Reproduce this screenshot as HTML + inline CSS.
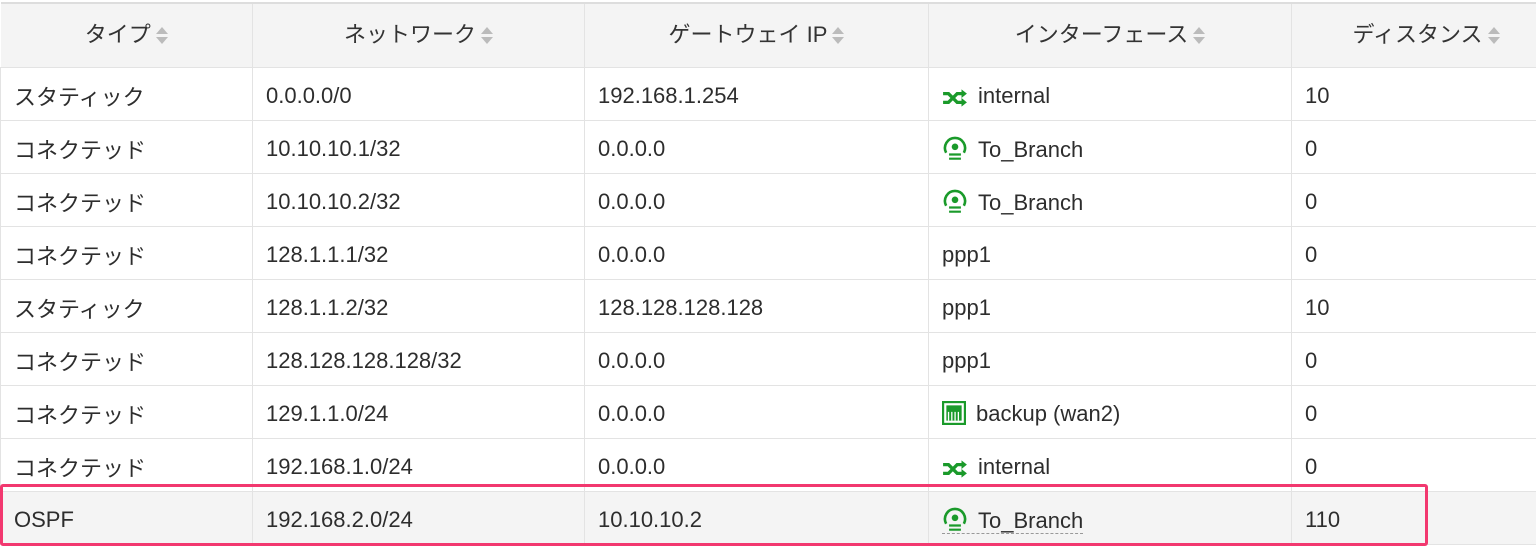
<!DOCTYPE html>
<html><head><meta charset="utf-8"><style>
body{margin:0;width:1536px;height:549px;overflow:hidden;background:#fff;font-family:"Liberation Sans","Noto Sans CJK JP",sans-serif;color:#2d2d2d;position:relative}
table{position:absolute;left:0;top:2px;border-collapse:collapse;table-layout:fixed;width:1560px}
td,th{border:1px solid #e3e3e3;font-size:22px;padding:0 13px;white-space:nowrap;overflow:hidden}
th{height:64px;padding-bottom:4px;box-sizing:border-box;background:#f4f4f4;font-weight:normal;text-align:center;color:#333;border-top:2px solid #ddd;border-left:1px solid #d8d8d8}
td{height:47px;padding-top:5px}
tr.last td{background:#f4f4f4}
.s{display:inline-block;vertical-align:middle;margin-left:5px;width:12px;height:18px;position:relative}
.s:before{content:"";position:absolute;left:0;top:0;border:6px solid transparent;border-bottom:7px solid #bbb;border-top:0}
.s:after{content:"";position:absolute;left:0;top:10px;border:6px solid transparent;border-top:7px solid #bbb;border-bottom:0}
.ic{display:inline-block;vertical-align:-4px;margin-right:10px}
.box{position:absolute;left:0;top:484px;width:1422px;height:56px;border:3px solid #f2386f;border-radius:3px}
.u{border-bottom:1px dashed #999}
</style></head><body>
<table>
<colgroup><col style="width:252px"><col style="width:332px"><col style="width:344px"><col style="width:363px"><col style="width:269px"></colgroup>
<tr><th style="border-left:0">タイプ<span class="s"></span></th><th>ネットワーク<span class="s"></span></th><th>ゲートウェイ IP<span class="s"></span></th><th>インターフェース<span class="s"></span></th><th>ディスタンス<span class="s"></span></th></tr>
<tr><td>スタティック</td><td>0.0.0.0/0</td><td>192.168.1.254</td><td><svg class="ic" width="26" height="18" viewBox="0 0 24 16"><path d="M1 4h5l8 8h5M1 12h5l8-8h5" stroke="#1a9a2a" stroke-width="3" fill="none"/><path d="M18 0l5 4-5 4zM18 8l5 4-5 4z" fill="#1a9a2a"/></svg>internal</td><td>10</td></tr>
<tr><td>コネクテッド</td><td>10.10.10.1/32</td><td>0.0.0.0</td><td><svg class="ic" width="26" height="26" viewBox="0 0 22 22"><path d="M3.5 15A8.5 8.5 0 1 1 18.5 15" stroke="#1a9a2a" stroke-width="2.2" fill="none"/><circle cx="11" cy="10" r="2.8" fill="#1a9a2a"/><path d="M6 16.5h10M6 20h10" stroke="#1a9a2a" stroke-width="1.8"/></svg>To_Branch</td><td>0</td></tr>
<tr><td>コネクテッド</td><td>10.10.10.2/32</td><td>0.0.0.0</td><td><svg class="ic" width="26" height="26" viewBox="0 0 22 22"><path d="M3.5 15A8.5 8.5 0 1 1 18.5 15" stroke="#1a9a2a" stroke-width="2.2" fill="none"/><circle cx="11" cy="10" r="2.8" fill="#1a9a2a"/><path d="M6 16.5h10M6 20h10" stroke="#1a9a2a" stroke-width="1.8"/></svg>To_Branch</td><td>0</td></tr>
<tr><td>コネクテッド</td><td>128.1.1.1/32</td><td>0.0.0.0</td><td>ppp1</td><td>0</td></tr>
<tr><td>スタティック</td><td>128.1.1.2/32</td><td>128.128.128.128</td><td>ppp1</td><td>10</td></tr>
<tr><td>コネクテッド</td><td>128.128.128.128/32</td><td>0.0.0.0</td><td>ppp1</td><td>0</td></tr>
<tr><td>コネクテッド</td><td>129.1.1.0/24</td><td>0.0.0.0</td><td><svg class="ic" width="24" height="24" viewBox="0 0 22 22"><rect x="1" y="1" width="20" height="20" fill="none" stroke="#1a9a2a" stroke-width="2"/><rect x="4" y="4" width="14" height="14" fill="#1a9a2a"/><path d="M6 10v8M9 10v8M12 10v8M15 10v8" stroke="#fff" stroke-width="1.2"/></svg>backup (wan2)</td><td>0</td></tr>
<tr><td>コネクテッド</td><td>192.168.1.0/24</td><td>0.0.0.0</td><td><svg class="ic" width="26" height="18" viewBox="0 0 24 16"><path d="M1 4h5l8 8h5M1 12h5l8-8h5" stroke="#1a9a2a" stroke-width="3" fill="none"/><path d="M18 0l5 4-5 4zM18 8l5 4-5 4z" fill="#1a9a2a"/></svg>internal</td><td>0</td></tr>
<tr class="last"><td>OSPF</td><td>192.168.2.0/24</td><td>10.10.10.2</td><td><span class="u"><svg class="ic" width="26" height="26" viewBox="0 0 22 22"><path d="M3.5 15A8.5 8.5 0 1 1 18.5 15" stroke="#1a9a2a" stroke-width="2.2" fill="none"/><circle cx="11" cy="10" r="2.8" fill="#1a9a2a"/><path d="M6 16.5h10M6 20h10" stroke="#1a9a2a" stroke-width="1.8"/></svg>To_Branch</span></td><td>110</td></tr>
</table>
<div class="box"></div>
</body></html>
